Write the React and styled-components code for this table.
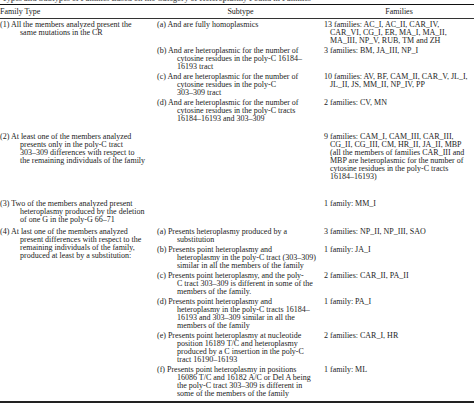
import React from 'react'
import styled, { createGlobalStyle } from 'styled-components'

const GlobalStyle = createGlobalStyle`
  html, body {
    margin: 0;
    padding: 0;
    background: #fff;
  }
  body {
    font-family: "Liberation Serif", "Times New Roman", serif;
    color: #222;
  }
`

const rows = [
  {
    top: 2,
    type: [
      '(1) All the members analyzed present the',
      'same mutations in the CR',
    ],
    subs: [
      {
        sub: ['(a) And are fully homoplasmics'],
        fam: [
          '13 families: AC_I, AC_II, CAR_IV,',
          'CAR_VI, CG_I, ER, MA_I, MA_II,',
          'MA_III, NP_V, RUB, TM and ZH',
        ],
      },
      {
        sub: [
          '(b) And are heteroplasmic for the number of',
          'cytosine residues in the poly-C 16184–',
          '16193 tract',
        ],
        fam: ['3 families: BM, JA_III, NP_I'],
      },
      {
        sub: [
          '(c) And are heteroplasmic for the number of',
          'cytosine residues in the poly-C',
          '303–309 tract',
        ],
        fam: [
          '10 families: AV, BF, CAM_II, CAR_V, JL_I,',
          'JL_II, JS, MM_II, NP_IV, PP',
        ],
      },
      {
        sub: [
          '(d) And are heteroplasmic for the number of',
          'cytosine residues in the poly-C tracts',
          '16184–16193 and 303–309',
        ],
        fam: ['2 families: CV, MN'],
      },
    ],
  },
  {
    top: 10,
    type: [
      '(2) At least one of the members analyzed',
      'presents only in the poly-C tract',
      '303–309 differences with respect to',
      'the remaining individuals of the family',
    ],
    subs: [
      {
        sub: [],
        fam: [
          '9 families: CAM_I, CAM_III, CAR_III,',
          'CG_II, CG_III, CM, HR_II, JA_II, MBP',
          '(all the members of families CAR_III and',
          'MBP are heteroplasmic for the number of',
          'cytosine residues in the poly-C tracts',
          '16184–16193)',
        ],
      },
    ],
  },
  {
    top: 19,
    type: [
      '(3) Two of the members analyzed present',
      'heteroplasmy produced by the deletion',
      'of one G in the poly-G 66–71',
    ],
    subs: [{ sub: [], fam: ['1 family: MM_I'] }],
  },
  {
    top: 4,
    type: [
      '(4) At last one of the members analyzed',
      'present differences with respect to the',
      'remaining individuals of the family,',
      'produced at least by a substitution:',
    ],
    subs: [
      {
        sub: ['(a) Presents heteroplasmy produced by a', 'substitution'],
        fam: ['3 families: NP_II, NP_III, SAO'],
      },
      {
        sub: [
          '(b) Presents point heteroplasmy and',
          'heteroplasmy in the poly-C tract (303–309)',
          'similar in all the members of the family',
        ],
        fam: ['1 family: JA_I'],
      },
      {
        sub: [
          '(c) Presents point heteroplasmy, and the poly-',
          'C tract 303–309 is different in some of the',
          'members of the family.',
        ],
        fam: ['2 families: CAR_II, PA_II'],
      },
      {
        sub: [
          '(d) Presents point heteroplasmy and',
          'heteroplasmy in the poly-C tracts 16184–',
          '16193 and 303–309 similar in all the',
          'members of the family',
        ],
        fam: ['1 family: PA_I'],
      },
      {
        sub: [
          '(e) Presents point heteroplasmy at nucleotide',
          'position 16189 T/C and heteroplasmy',
          'produced by a C insertion in the poly-C',
          'tract 16190–16193',
        ],
        fam: ['2 families: CAR_I, HR'],
      },
      {
        sub: [
          '(f) Presents point heteroplasmy in positions',
          '16086 T/C and 16182 A/C or Del A being',
          'the poly-C tract 303–309 is different in',
          'some of the members of the family',
        ],
        fam: ['1 family: ML'],
      },
    ],
  },
]

const Page = styled.div`
  width: 474px;
  height: 410px;
  overflow: hidden;
  font-size: 8px;
  line-height: 8px;
`

// only the bottom edge of the caption line is visible in the shot
const Caption = styled.div`
  height: 2.5px;
  overflow: hidden;
  display: flex;
  align-items: flex-end;
  font-weight: bold;
  white-space: nowrap;
  color: #666;
  padding-left: 2px;
`

const Table = styled.div`
  margin-top: 1.5px;
  padding-bottom: 3px;
  border-top: 1.5px solid #111;
  border-bottom: 2.5px solid #222;
`

const Head = styled.div`
  display: grid;
  grid-template-columns: 157px 167px 150px;
  height: 13px;
  line-height: 14px;
  border-bottom: 1px solid #333;
`

const HeadCell = styled.div`
  text-align: ${(p) => p.$align || 'left'};
  white-space: nowrap;
`

const Row = styled.div`
  display: grid;
  grid-template-columns: 157px 317px;
  padding-top: ${(p) => p.$top}px;
`

const SubList = styled.div`
  display: flex;
  flex-direction: column;
  gap: 2px;
`

const SubRow = styled.div`
  display: grid;
  grid-template-columns: 167px 150px;
`

const Cell = styled.div`
  display: flex;
  flex-direction: column;
`

const Line = styled.span`
  display: block;
  height: 8px;
  white-space: nowrap;
  padding-left: ${(p) => p.$indent}px;
`

const Lines = ({ lines, indent }) => (
  <Cell>
    {lines.map((t, i) => (
      <Line key={i} $indent={i === 0 ? 0 : indent}>
        {t}
      </Line>
    ))}
  </Cell>
)

export default function App() {
  return (
    <Page>
      <GlobalStyle />
      <Caption>Types and Subtypes of Families Based on the Category of Heteroplasmy Found in Families</Caption>
      <Table>
        <Head>
          <HeadCell>Family Type</HeadCell>
          <HeadCell $align="center">Subtype</HeadCell>
          <HeadCell $align="center">Families</HeadCell>
        </Head>
        {rows.map((r, i) => (
          <Row key={i} $top={r.top}>
            <Lines lines={r.type} indent={20} />
            <SubList>
              {r.subs.map((s, j) => (
                <SubRow key={j}>
                  <Lines lines={s.sub} indent={20} />
                  <Lines lines={s.fam} indent={6} />
                </SubRow>
              ))}
            </SubList>
          </Row>
        ))}
      </Table>
    </Page>
  )
}
